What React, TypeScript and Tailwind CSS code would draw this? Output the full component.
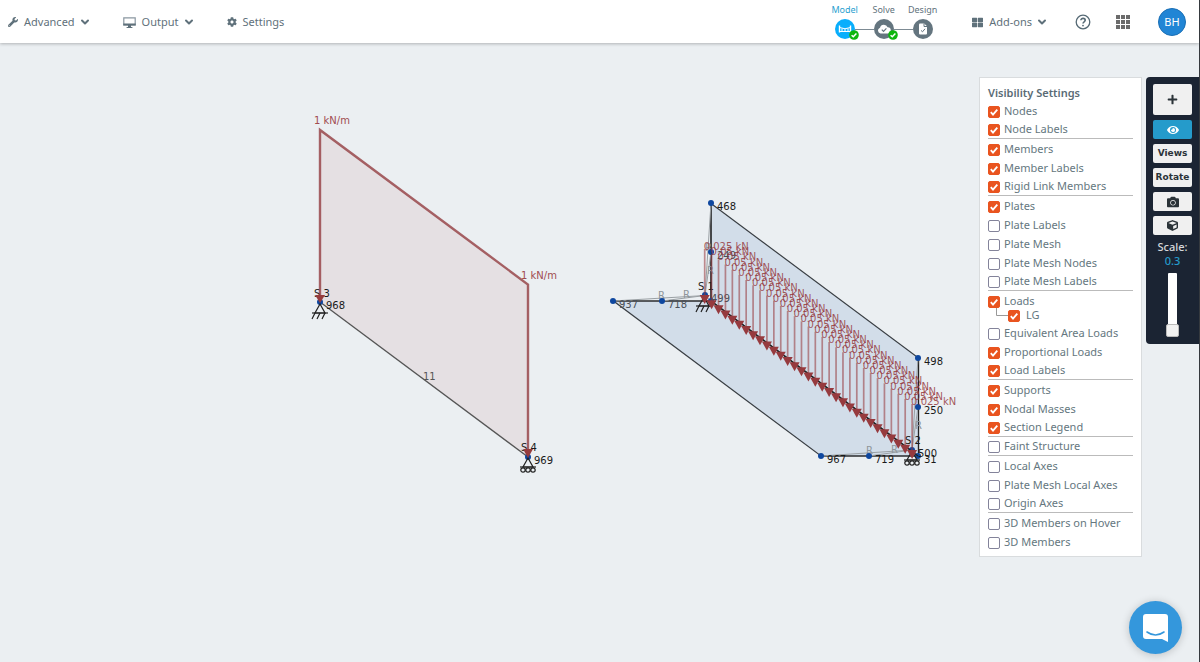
import { useState } from "react"
import { FaWrench, FaCog, FaThLarge, FaPlus, FaEye, FaCamera, FaCube } from "react-icons/fa"
import { FiChevronDown } from "react-icons/fi"

const visibilityGroups = [
  [
    { name: "Nodes", on: true },
    { name: "Node Labels", on: true },
  ],
  [
    { name: "Members", on: true },
    { name: "Member Labels", on: true },
    { name: "Rigid Link Members", on: true },
  ],
  [
    { name: "Plates", on: true },
    { name: "Plate Labels", on: false },
    { name: "Plate Mesh", on: false },
    { name: "Plate Mesh Nodes", on: false },
    { name: "Plate Mesh Labels", on: false },
  ],
  [
    { name: "Loads", on: true },
    { name: "LG", on: true, child: true },
    { name: "Equivalent Area Loads", on: false },
    { name: "Proportional Loads", on: true },
    { name: "Load Labels", on: true },
  ],
  [
    { name: "Supports", on: true },
    { name: "Nodal Masses", on: true },
    { name: "Section Legend", on: true },
  ],
  [{ name: "Faint Structure", on: false }],
  [
    { name: "Local Axes", on: false },
    { name: "Plate Mesh Local Axes", on: false },
    { name: "Origin Axes", on: false },
  ],
  [
    { name: "3D Members on Hover", on: false },
    { name: "3D Members", on: false },
  ],
]

// Nodes of the model, label sits to the lower right
const nodes = [
  { x: 320, y: 302, label: "968" },
  { x: 528, y: 457, label: "969" },
  { x: 711, y: 203, label: "468" },
  { x: 711, y: 252, label: "249", behind: true },
  { x: 711, y: 301, label: "" },
  { x: 705, y: 295, label: "499", behind: true },
  { x: 613, y: 301, label: "937", behind: true },
  { x: 662, y: 301, label: "718", behind: true },
  { x: 918, y: 358, label: "498" },
  { x: 918, y: 407, label: "250" },
  { x: 918, y: 456, label: "31" },
  { x: 912, y: 450, label: "500" },
  { x: 821, y: 456, label: "967" },
  { x: 869, y: 456, label: "719" },
]

const LOADS = 31

const pointLoads = Array.from({ length: LOADS }, (_, i) => {
  const t = i / (LOADS - 1)
  return {
    x: 704.7 + t * 207.4,
    y: 302 + t * 155,
    label: i === 0 || i === LOADS - 1 ? "0.025 kN" : "0.05 kN",
  }
})

function Support({ x, y, roller }: { x: number; y: number; roller?: boolean }) {
  return (
    <g transform={`translate(${x} ${y})`} fill="none" stroke="#222" strokeWidth="1.2">
      <path d="M0 1L-5 10H5Z" />
      <path d="M-8 10H8" />
      {roller ? (
        <>
          <circle cx="-5" cy="13" r="2.2" />
          <circle cx="0" cy="13" r="2.2" />
          <circle cx="5" cy="13" r="2.2" />
        </>
      ) : (
        <path d="M-5 10L-8 16M0 10L-3 16M5 10L2 16" />
      )}
    </g>
  )
}

function ModelCanvas() {
  return (
    <svg className="absolute inset-0 h-full w-full" fontFamily="'DejaVu Sans', sans-serif" fontSize="10">
      {/* Plates */}
      <g fill="#b9cbdf" fillOpacity="0.5" stroke="#3a3f44" strokeWidth="1.2">
        <path d="M711 203.5L918.5 358V456L711 301Z" />
        <path d="M613.5 301H711L918.5 456H821Z" />
      </g>
      <g stroke="#222" strokeWidth="1.2">
        <path d="M711 203V301M918.5 358V456M613 301H711M821 456H918" />
      </g>

      {/* Rigid links */}
      <g stroke="#9aa0a4" strokeWidth="1" fill="none">
        <path d="M613 301L705 295.5L662 301M711 203L705 295.5L711 252M705 295.5L711 301" />
        <path d="M821 456L912 450L869 456M918 358L912 450L918 407M912 450L918 456" />
      </g>
      <g fill="#8f9599">
        <text x="658" y="299">R</text>
        <text x="683" y="298">R</text>
        <text x="707" y="274">R</text>
        <text x="705" y="251">R</text>
        <text x="866" y="454">R</text>
        <text x="891" y="453">R</text>
        <text x="915" y="429">R</text>
      </g>

      {/* Distributed load */}
      <path d="M320 130L528 284.5V457L320 302Z" fill="#b06060" fillOpacity="0.1" />
      <path d="M320 302L528 457" stroke="#555" strokeWidth="1.3" />

      <g>
        {nodes.map((node) => (
          <circle key={`${node.x}-${node.y}`} cx={node.x} cy={node.y} r="3" fill="#0e479f" />
        ))}
      </g>
      <path d="M711 301L918 456" stroke="#222" strokeWidth="1.2" />
      <g>
        {nodes.map((node) => (
          <text key={`${node.x}-${node.y}`} x={node.x + 6} y={node.y + 6.5} fill={node.behind ? "#4b5058" : "#1a1a1a"}>
            {node.label}
          </text>
        ))}
      </g>
      <g fill="#1a1a1a">
        <text x="314" y="297">S 3</text>
        <text x="521" y="451">S 4</text>
        <text x="698" y="290">S 1</text>
        <text x="905" y="444">S 2</text>
        <text x="423" y="380" fill="#555">11</text>
      </g>
      <Support x={320} y={303} />
      <Support x={528} y={457} roller />
      <Support x={704} y={296} />
      <Support x={912} y={450} roller />

      <path d="M320 300V130L528 284.5V455" fill="none" stroke="#8e3236" strokeOpacity="0.75" strokeWidth="2.4" />
      <path d="M315 295H325L320 303Z M523 449H533L528 458Z" fill="#963c3e" />
      <g fill="#a04c50">
        <text x="314" y="124">1 kN/m</text>
        <text x="521" y="279">1 kN/m</text>
      </g>

      {/* Nodal loads */}
      {pointLoads.map((load) => (
        <g key={load.x} fill="#963a3e">
          <path d={`M${load.x} ${load.y - 53}V${load.y - 6}`} stroke="#963438" strokeOpacity="0.55" strokeWidth="1.7" />
          <path d={`M${load.x - 5} ${load.y - 7}h10l-5 9Z`} />
          <text x={load.x - 1} y={load.y - 52} fillOpacity="0.85">{load.label}</text>
        </g>
      ))}
    </svg>
  )
}

function DoneBadge() {
  return (
    <svg viewBox="0 0 10 10" className="absolute -right-1 -bottom-px h-[10px] w-[10px]">
      <circle cx="5" cy="5" r="4.8" fill="#0db60d" />
      <path d="M2.6 5.2L4.3 6.8L7.4 3.6" fill="none" stroke="#fff" strokeWidth="1.5" />
    </svg>
  )
}

function Stepper() {
  return (
    <nav className="flex self-start pt-[3px] text-[9px] leading-3">
      <a href="#model" className="flex w-[39px] flex-col items-center gap-[3px] text-[#2a9fd0]">
        Model
        <span className="flex w-full items-center">
          <span className="flex-1" />
          <span className="relative flex h-5 w-5 items-center justify-center rounded-full bg-[#08aefc]">
            <svg viewBox="0 0 14 10" className="h-[10px] w-[14px]" fill="none" stroke="#fff">
              <path d="M1.5 1.5V8.5M12.5 1.5V8.5" strokeWidth="1.4" />
              <path d="M1.5 3.5Q7 6 12.5 3.5M1.5 7.5H12.5M4 4.5V7.5M7 5V7.5M10 4.5V7.5" strokeWidth="1" />
            </svg>
            <DoneBadge />
          </span>
          <span className="h-px flex-1 bg-[#7d8b94]" />
        </span>
      </a>
      <a href="#solve" className="flex w-[39px] flex-col items-center gap-[3px] text-[#62737d]">
        Solve
        <span className="flex w-full items-center">
          <span className="h-px flex-1 bg-[#7d8b94]" />
          <span className="relative flex h-5 w-5 items-center justify-center rounded-full bg-[#64757f]">
            <svg viewBox="0 0 14 10" className="h-[10px] w-[14px]">
              <path d="M3.5 9.5A3 3 0 0 1 3 3.7A4 4 0 0 1 10.6 3.3A3.1 3.1 0 0 1 10.8 9.5Z" fill="#fff" />
              <path d="M4.8 5.6L6.5 7.3L9.4 4.4" fill="none" stroke="#64757f" strokeWidth="1.2" />
            </svg>
            <DoneBadge />
          </span>
          <span className="h-px flex-1 bg-[#7d8b94]" />
        </span>
      </a>
      <a href="#design" className="flex w-[39px] flex-col items-center gap-[3px] text-[#62737d]">
        Design
        <span className="flex w-full items-center">
          <span className="h-px flex-1 bg-[#7d8b94]" />
          <span className="flex h-5 w-5 items-center justify-center rounded-full bg-[#64757f]">
            <svg viewBox="0 0 10 12" className="h-3 w-[10px]">
              <path d="M1 1.5Q1 .5 2 .5H6.2L9 3.3V10.5Q9 11.5 8 11.5H2Q1 11.5 1 10.5Z" fill="#fff" />
              <path d="M6 .5V3.5H9M3 7.4L4.5 8.8L7 5.8" fill="none" stroke="#64757f" strokeWidth="1" />
            </svg>
          </span>
          <span className="flex-1" />
        </span>
      </a>
    </nav>
  )
}

function Header() {
  return (
    <header className="relative z-10 flex h-[43px] items-center justify-between bg-white pt-px pr-[13px] pl-2 text-[11px] text-[#5f717b] shadow-[0_1px_3px_rgba(0,0,0,0.25)]">
      <div className="flex items-center">
        <button className="flex items-center">
          <FaWrench className="mr-1.5 h-[10px] w-[10px]" />
          Advanced
          <FiChevronDown className="ml-1 h-3 w-3" strokeWidth={4} />
        </button>
        <button className="ml-8 flex items-center">
          <svg viewBox="0 0 13 11" className="mr-1.5 h-[11px] w-[13px]">
            <path d="M.8.8H12.2V8H.8Z" fill="#fff" stroke="#8996a0" strokeWidth="1.2" />
            <path d="M.3 6.6H12.7V8.6H.3ZM5 8.5H8V10H9.4V11H3.6V10H5Z" fill="#5f717b" />
          </svg>
          Output
          <FiChevronDown className="ml-1 h-3 w-3" strokeWidth={4} />
        </button>
        <button className="ml-8 flex items-center">
          <FaCog className="mr-1.5 h-[10px] w-[10px]" />
          Settings
        </button>
      </div>

      <div className="flex h-full items-center">
        <Stepper />
        <button className="ml-[30px] flex items-center">
          <FaThLarge className="mr-1.5 h-[11px] w-[11px]" />
          Add-ons
          <FiChevronDown className="ml-1 h-3 w-3" strokeWidth={4} />
        </button>
        <button aria-label="Help" className="ml-[27px]">
          <svg viewBox="0 0 16 16" className="h-4 w-4" fill="none" stroke="#566a75">
            <circle cx="8" cy="8" r="6.8" strokeWidth="1.3" />
            <path d="M5.9 6.3C5.9 3.7 10.2 3.8 10.2 6.3C10.2 7.8 8 7.8 8 9.5" strokeWidth="1.6" />
            <circle cx="8" cy="11.6" r=".9" fill="#566a75" stroke="none" />
          </svg>
        </button>
        <button aria-label="Apps" className="ml-[25px]">
          <svg viewBox="0 0 14 14" className="h-[14px] w-[14px]" fill="#6b6b6b">
            <path d="M0 0H4V4H0ZM5 0H9V4H5ZM10 0H14V4H10ZM0 5H4V9H0ZM5 5H9V9H5ZM10 5H14V9H10ZM0 10H4V14H0ZM5 10H9V14H5ZM10 10H14V14H10Z" />
          </svg>
        </button>
        <button className="ml-7 h-7 w-7 rounded-full border border-[#1a6fb5] bg-[#2185d5] text-[11px] text-white">
          BH
        </button>
      </div>
    </header>
  )
}

function VisibilityRow({ name, on, child }: { name: string; on: boolean; child?: boolean }) {
  return (
    <label className={`flex items-center gap-1 border-[#bbb] ${child ? "h-[13px] pb-1" : "h-[19px]"}`}>
      {child && (
        <svg viewBox="0 0 12 13" className="ml-2 -mr-1 h-[13px] w-3" fill="none" stroke="#999">
          <path d="M.5 0V7.5H12" />
        </svg>
      )}
      <span className="grid pt-0.5">
        <input
          type="checkbox"
          defaultChecked={on}
          className="peer col-start-1 row-start-1 h-3 w-3 appearance-none rounded-[2px] border border-[#83839a] bg-white checked:border-[#e9541f] checked:bg-[#e9541f]"
        />
        <svg viewBox="0 0 12 12" className="pointer-events-none invisible col-start-1 row-start-1 h-3 w-3 peer-checked:visible">
          <path d="M2.8 6.2L5 8.6L9.3 3.6" fill="none" stroke="#fff" strokeWidth="1.8" />
        </svg>
      </span>
      <span className={child ? "pl-0.5" : ""}>{name}</span>
    </label>
  )
}

function VisibilitySettings() {
  return (
    <section className="w-[163px] border border-[#d9dcde] bg-white px-2 pt-[7px] pb-[5px] text-[11px] leading-4 text-[#657780]">
      <h2 className="font-semibold text-[#5a6b75]">Visibility Settings</h2>
      {visibilityGroups.map((group) => (
        <div key={group[0].name} className="[&:not(:last-child)>label:last-child]:border-b">
          {group.map((item) => (
            <VisibilityRow key={item.name} {...item} />
          ))}
        </div>
      ))}
    </section>
  )
}

function Toolbar() {
  const [scale, setScale] = useState(0.3)
  const button = "flex h-[19px] w-full items-center justify-center rounded-[2px] bg-[#f0f0f0] text-[#2b3338]"

  return (
    <aside className="flex w-[53px] flex-col items-center gap-[5px] rounded-l bg-[#1b2433] px-[7px] py-[7px] font-['DejaVu_Sans',sans-serif] text-[9px] font-bold">
      <button aria-label="Add" className="flex h-[31px] w-full items-center justify-center rounded-[2px] bg-[#f0f0f0] text-[#2b3338]">
        <FaPlus className="h-[11px] w-[11px]" />
      </button>
      <button aria-label="Visibility" className="flex h-[19px] w-full items-center justify-center rounded-[2px] bg-[#259bcb] text-white">
        <FaEye className="h-3 w-3" />
      </button>
      <button className={button}>Views</button>
      <button className={button}>Rotate</button>
      <button aria-label="Screenshot" className={button}>
        <FaCamera className="h-3 w-3" />
      </button>
      <button aria-label="Render" className={button}>
        <FaCube className="h-[11px] w-[11px]" />
      </button>
      <label htmlFor="scale" className="text-center font-['Noto_Sans',sans-serif] text-[11px] leading-[14px] font-medium text-[#d5d7da]">
        Scale:
        <span className="block text-[#259bcb]">{scale}</span>
      </label>
      <input
        id="scale"
        type="range"
        min="0"
        max="50"
        step="0.1"
        value={scale}
        onChange={(e) => setScale(Number(e.target.value))}
        className="h-[64px] w-[13px] appearance-none bg-transparent [direction:rtl] [writing-mode:vertical-lr] [&::-webkit-slider-runnable-track]:w-[9px] [&::-webkit-slider-runnable-track]:rounded-[1px] [&::-webkit-slider-runnable-track]:bg-white [&::-webkit-slider-thumb]:-ml-0.5 [&::-webkit-slider-thumb]:h-[13px] [&::-webkit-slider-thumb]:w-[13px] [&::-webkit-slider-thumb]:appearance-none [&::-webkit-slider-thumb]:rounded-[2px] [&::-webkit-slider-thumb]:border [&::-webkit-slider-thumb]:border-[#bbb] [&::-webkit-slider-thumb]:bg-[#f2f2f2]"
      />
    </aside>
  )
}

export default function App() {
  return (
    <div className="relative flex min-h-screen flex-col overflow-hidden border-r border-[#35393e] bg-[#ebeff2] font-['Noto_Sans','Open_Sans',sans-serif]">
      <ModelCanvas />
      <Header />
      <main className="relative flex flex-1 items-start justify-end gap-1 pt-[34px]">
        <VisibilitySettings />
        <Toolbar />
      </main>
      <button
        aria-label="Open chat"
        className="absolute right-[17px] bottom-2 flex h-[53px] w-[53px] items-center justify-center rounded-full bg-[#3497dc] shadow-[0_1px_8px_rgba(0,0,0,0.2)]"
      >
        <svg viewBox="0 0 26 28" className="h-7 w-[26px]">
          <path d="M3 0H22Q25 0 25 3V28L19 25H3Q0 25 0 22V3Q0 0 3 0Z" fill="#fff" />
          <path d="M4 18Q12.5 24 21 18" fill="none" stroke="#3497dc" strokeWidth="1.6" strokeLinecap="round" />
        </svg>
      </button>
    </div>
  )
}
